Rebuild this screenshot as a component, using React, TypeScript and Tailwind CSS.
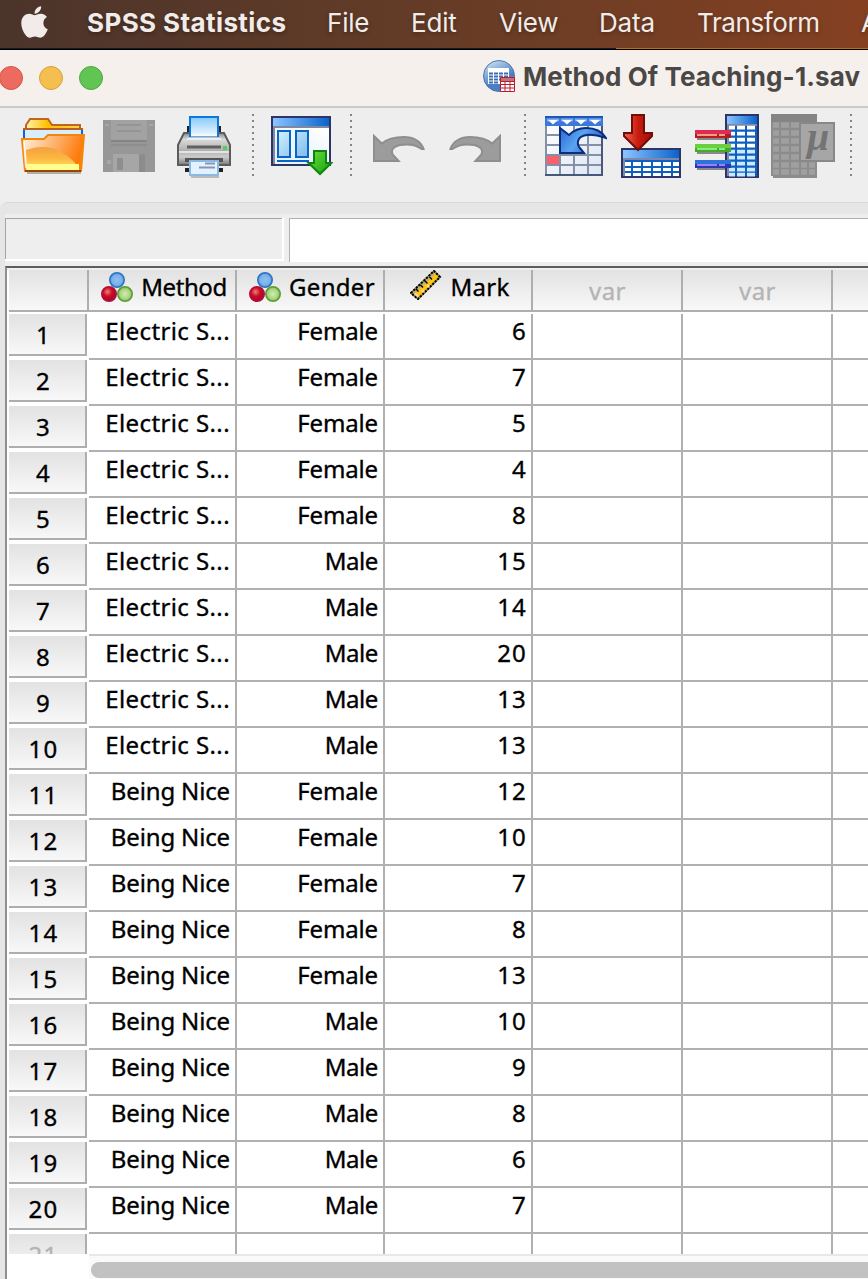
import type { ReactNode } from "react";
import { FaApple } from "react-icons/fa";
import clsx from "clsx";

interface CaseRow {
  method: string;
  gender: string;
  mark: number;
}

const SHOCK = "Electric S...";
const NICE = "Being Nice";

const cases: CaseRow[] = [
  { method: SHOCK, gender: "Female", mark: 6 },
  { method: SHOCK, gender: "Female", mark: 7 },
  { method: SHOCK, gender: "Female", mark: 5 },
  { method: SHOCK, gender: "Female", mark: 4 },
  { method: SHOCK, gender: "Female", mark: 8 },
  { method: SHOCK, gender: "Male", mark: 15 },
  { method: SHOCK, gender: "Male", mark: 14 },
  { method: SHOCK, gender: "Male", mark: 20 },
  { method: SHOCK, gender: "Male", mark: 13 },
  { method: SHOCK, gender: "Male", mark: 13 },
  { method: NICE, gender: "Female", mark: 12 },
  { method: NICE, gender: "Female", mark: 10 },
  { method: NICE, gender: "Female", mark: 7 },
  { method: NICE, gender: "Female", mark: 8 },
  { method: NICE, gender: "Female", mark: 13 },
  { method: NICE, gender: "Male", mark: 10 },
  { method: NICE, gender: "Male", mark: 9 },
  { method: NICE, gender: "Male", mark: 8 },
  { method: NICE, gender: "Male", mark: 6 },
  { method: NICE, gender: "Male", mark: 7 },
];

const gridCols =
  "grid grid-cols-[80px_148px_148px_148px_150px_150px_150px] w-[974px]";

// Toolbar icons are drawn on a 2px unit grid
function Icon({
  w,
  h,
  className,
  children,
}: {
  w: number;
  h: number;
  className?: string;
  children: ReactNode;
}) {
  return (
    <svg
      viewBox={`0 0 ${w} ${h}`}
      width={w * 2}
      height={h * 2}
      className={clsx("block shrink-0", className)}
    >
      {children}
    </svg>
  );
}

function Gradients() {
  return (
    <svg width="0" height="0" className="absolute">
      <defs>
        <linearGradient id="gold" x1="0" y1="0" x2="1" y2="0">
          <stop offset="0" stopColor="#fff3b0" />
          <stop offset="0.4" stopColor="#ffc000" />
          <stop offset="1" stopColor="#ffd24a" />
        </linearGradient>
        <linearGradient id="folder" x1="0" y1="0" x2="1" y2="0.25">
          <stop offset="0" stopColor="#fff4e6" />
          <stop offset="0.5" stopColor="#fdb878" />
          <stop offset="1" stopColor="#ff7a08" />
        </linearGradient>
        <linearGradient id="folderLow" x1="0" y1="0" x2="0" y2="1">
          <stop offset="0" stopColor="#f4a040" />
          <stop offset="0.5" stopColor="#fcb840" />
          <stop offset="1" stopColor="#ffe870" />
        </linearGradient>
        <linearGradient id="paper" x1="0" y1="0" x2="0" y2="1">
          <stop offset="0" stopColor="#86c9fb" />
          <stop offset="1" stopColor="#f0f9ff" />
        </linearGradient>
        <linearGradient id="steel" x1="0" y1="0" x2="0" y2="1">
          <stop offset="0" stopColor="#8a8a8a" />
          <stop offset="0.2" stopColor="#dadada" />
          <stop offset="0.55" stopColor="#b0b0b0" />
          <stop offset="0.75" stopColor="#cccccc" />
          <stop offset="1" stopColor="#777" />
        </linearGradient>
        <linearGradient id="bar" x1="0" y1="0" x2="1" y2="0">
          <stop offset="0" stopColor="#8cc4ff" />
          <stop offset="1" stopColor="#0a64cc" />
        </linearGradient>
        <linearGradient id="pane" x1="0" y1="0" x2="1" y2="1">
          <stop offset="0" stopColor="#d4f0fa" />
          <stop offset="1" stopColor="#7cbcec" />
        </linearGradient>
        <linearGradient id="body" x1="1" y1="0.3" x2="0.6" y2="1">
          <stop offset="0" stopColor="#fff" />
          <stop offset="1" stopColor="#e6f2fc" />
        </linearGradient>
        <linearGradient id="green" x1="0" y1="0" x2="1" y2="1">
          <stop offset="0" stopColor="#6be038" />
          <stop offset="1" stopColor="#14a010" />
        </linearGradient>
        <linearGradient id="red" x1="0" y1="0" x2="1" y2="0">
          <stop offset="0" stopColor="#f06450" />
          <stop offset="0.5" stopColor="#c81c10" />
          <stop offset="1" stopColor="#a01008" />
        </linearGradient>
        <linearGradient id="swoosh" x1="0" y1="0" x2="1" y2="0.4">
          <stop offset="0" stopColor="#2468d8" />
          <stop offset="0.5" stopColor="#5ca4f0" />
          <stop offset="1" stopColor="#2060cc" />
        </linearGradient>
        <linearGradient id="cell" x1="0" y1="0" x2="1" y2="1">
          <stop offset="0" stopColor="#fff" />
          <stop offset="1" stopColor="#dde6f4" />
        </linearGradient>
        <linearGradient id="disc" x1="0.3" y1="0" x2="0.6" y2="0.6">
          <stop offset="0" stopColor="#c4dcf0" />
          <stop offset="1" stopColor="#4a7fc0" />
        </linearGradient>
        <radialGradient id="ballBlue">
          <stop offset="0" stopColor="#8fc0f2" />
          <stop offset="0.7" stopColor="#7ab2ea" />
          <stop offset="1" stopColor="#5090d4" />
        </radialGradient>
        <radialGradient id="ballRed" cx="0.4" cy="0.35">
          <stop offset="0" stopColor="#f08080" />
          <stop offset="0.6" stopColor="#cc1020" />
          <stop offset="1" stopColor="#b00830" />
        </radialGradient>
        <radialGradient id="ballGreen">
          <stop offset="0" stopColor="#d4ecb0" />
          <stop offset="0.7" stopColor="#a8d480" />
          <stop offset="1" stopColor="#80b850" />
        </radialGradient>
      </defs>
    </svg>
  );
}

function OpenIcon() {
  return (
    <Icon w={32} h={28}>
      <rect x="3" y="27" width="27" height="1" fill="#b0aca8" />
      <path d="M2.5 6V3.5L4.5.5h9l2 3h14V6z" fill="url(#gold)" stroke="#c06420" />
      <path d="M1 5h30v12H1z" fill="#b8dcff" />
      <path d="M2 6h28v4H2z" fill="#d8eeff" />
      <path d="M1 5.5h30" stroke="#b86020" />
      <path d="M1.5 6v5M30.5 6v4" stroke="#0a64dc" />
      <path d="M.5 10.5h11l2-2h18L30 26.5H2z" fill="url(#folder)" stroke="#f88408" />
      <path
        d="M2.5 16c6-2 12-2 16.5.5 5 2.5 8.5 5.5 10 9.5H3z"
        fill="url(#folderLow)"
      />
      <path d="M3 23h26v3H3z" fill="#ffff90" />
      <path d="M1.5 12 2.5 25" stroke="#fff" opacity="0.7" />
      <path d="M31 10 29.5 26" stroke="#f88408" />
      <path d="M2 26.5h28" stroke="#9c4406" />
    </Icon>
  );
}

function SaveIcon() {
  return (
    <Icon w={26} h={26} className="mt-0.5">
      <path d="M0 0h26v26H0z" fill="#979797" />
      <path d="M4 0h18v10H4z" fill="#a2a2a2" />
      <path d="M7 2.5h12M7 5.5h12" stroke="#959595" />
      <path d="M4 10.5h18" stroke="#848484" />
      <path d="M4 12.5h18" stroke="#8e8e8e" />
      <path d="M5 17h13v9H5z" fill="#a6a6a6" />
      <path d="M18 17h3v9h-3z" fill="#8c8c8c" />
      <path d="M7 19h3v6H7z" fill="#8e8e8e" />
      <path d="M1 2h2v1H1zM23 2h2v1h-2zM2 20h2v2H2z" fill="#a6a6a6" />
    </Icon>
  );
}

function PrintIcon() {
  return (
    <Icon w={27} h={31}>
      <path d="M5 5h17v4H5zM4 26h19v2H4z" fill="#222" />
      <path
        d="M3.5 8.5h20l2 4 1 2v10H.5v-10l1-2z"
        fill="url(#steel)"
        stroke="#5c5c5c"
      />
      <path d="M6.5.5h14V10h-14z" fill="url(#paper)" stroke="#0a78dc" />
      <path d="M7 9.7h13" stroke="#f2f9ff" />
      <path d="M5 11.5h17" stroke="#eee" />
      <path d="M5 15.5h17" stroke="#606060" strokeWidth="1.6" />
      <path d="M1 18h25" stroke="#e4e4e4" />
      <path d="M23 15h2v2h-2z" fill="#5ccc60" />
      <path d="M4 21h19v2H4z" fill="#555" />
      <path d="M7 30h14v1H7z" fill="#bbb" />
      <path d="M6.5 22.5h14v7h-14z" fill="#e4f2ff" stroke="#8cb8e4" />
      <path d="M14 23.7h5M11 25.7h8" stroke="#8298b4" />
    </Icon>
  );
}

function RecallIcon() {
  return (
    <Icon w={31} h={30}>
      <path d="M.5.5h29v24H.5z" fill="url(#body)" stroke="#2c3468" />
      <path d="M1 1h28v4H1z" fill="url(#bar)" />
      <path d="M1 5.5h28M1.5 5v19" stroke="#8088a0" />
      <path
        d="M3.5 7.5h6v13h-6zM12.5 7.5h6v13h-6z"
        fill="url(#pane)"
        stroke="#0a64c8"
      />
      <path d="M3 22.5h16" stroke="#0a64c8" />
      <path
        d="M21.5 17.5h6v6h2.7L24.5 29 18.8 23.5h2.7z"
        fill="url(#green)"
        stroke="#108410"
      />
    </Icon>
  );
}

function ArrowIcon({ flip }: { flip?: boolean }) {
  return (
    <Icon w={26} h={14} className={clsx("mt-[18px]", flip && "-scale-x-100")}>
      <path
        d="M.5 1v12.5h12.3L10 10.5C8.5 8 10.5 6 13.5 5.5 17.500 4.800 21 5 24.300 7.500h1C24 3.500 20 1.500 15.500 1.500 11 1.500 7 2.500 4.500 4.800z"
        fill="#9c9c9c"
        stroke="#8e8e8e"
      />
    </Icon>
  );
}

function GotoCaseIcon() {
  return (
    <Icon w={31} h={30}>
      <path d="M0 0h29v30H0z" fill="url(#cell)" />
      <path
        d="M.5 5v25M7.5 5v25M14.5 5v25M21.5 5v25M28.5 5v25M0 9.5h29M0 14.5h29M0 19.5h29M0 24.5h29"
        stroke="#8490a4"
      />
      <path d="M0 29.5h29M28.5 2v28" stroke="#485878" />
      <path d="M0 0h29v5H0z" fill="#3c78dc" />
      <path d="M0 .5h29" stroke="#2054b8" />
      <path d="M1 2h6M8 2h6M15 2h6M22 2h6" stroke="#7cacf0" strokeWidth="1.5" />
      <path
        d="M1.5 2h5L4 4.2zM8.5 2h5L11 4.2zM15.5 2h5L18 4.2zM22.5 2h5L25 4.2z"
        fill="#fff"
      />
      <path d="M1 20h6v4H1z" fill="#f8606c" />
      <path
        d="M7.5 6v12.5h12l-2.5-3c-1.5-3 0-5.5 4-6 4-.5 6.5.5 9.5 1.5C28 7 24.5 6 20.5 6 17 6 14.5 7 12 9.5z"
        fill="url(#swoosh)"
        stroke="#0c2c7c"
      />
    </Icon>
  );
}

function GotoVariableIcon() {
  const cols = [
    [2, 3],
    [6, 4],
    [11, 4],
    [16, 4],
    [21, 4],
    [26, 3],
  ];
  return (
    <Icon w={30} h={32}>
      <path d="M.5 17.5h29v14H.5z" fill="#0c60c0" stroke="#2c3468" />
      <path d="M1 18h28v4H1z" fill="url(#bar)" />
      <path d="M1 22.5h28M1.5 22v9" stroke="#8088a8" />
      {[24, 27, 29.5].map((y) =>
        cols.map(([x, w]) => (
          <rect
            key={`${x}-${y}`}
            x={x}
            y={y}
            width={w}
            height={y === 24 ? 2 : 1.5}
            fill="#fff"
          />
        )),
      )}
      <path
        d="M5.5.5h6v9h4V11l-7 7-7-7V9.5h4z"
        fill="url(#red)"
        stroke="#740c08"
      />
    </Icon>
  );
}

function VariablesIcon() {
  const bars = [
    { y: 8, top: "#dc2c54", low: "#b41c20", light: "#f0a080" },
    { y: 15, top: "#6cd03c", low: "#48a828", light: "#84ec88" },
    { y: 23, top: "#2c74dc", low: "#2838b8", light: "#a080f0" },
  ];
  return (
    <Icon w={32} h={32}>
      <path d="M15.5.5h16v31h-16z" fill="#0c60c0" stroke="#2c3468" />
      <path d="M16 1h15v4H16z" fill="url(#bar)" />
      <path d="M16 5.5h15M16.5 5v26" stroke="#8088a8" />
      {[6, 9, 12, 15, 18, 21, 24, 27, 29.5].map((y) => (
        <path
          key={y}
          d={`M17 ${y + 0.8}h3M21 ${y + 0.8}h4M26 ${y + 0.8}h4`}
          stroke={y < 17 ? "#fff" : "#cce8ff"}
          strokeWidth="1.8"
        />
      ))}
      {bars.map((b) => (
        <g key={b.y}>
          <rect x="1" y={b.y + 4} width="14" height="1" fill="#888" />
          <rect x="0" y={b.y} width="18" height="2" fill={b.top} />
          <rect x="0" y={b.y + 2} width="18" height="2" fill={b.low} />
          <path d={`M1 ${b.y + 2.5}h10M12 ${b.y + 2.5}h3`} stroke={b.light} />
        </g>
      ))}
    </Icon>
  );
}

function ValueLabelsIcon() {
  return (
    <Icon w={32} h={32}>
      <path d="M0 0h23v31H0zM1 31h22v1H1z" fill="#8c8c8c" />
      <path d="M0 0h23v4H0z" fill="#848484" />
      {[4, 8, 12, 16, 20, 24, 27.5].map((y) => (
        <path
          key={y}
          d={`M1 ${y + 1.5}h3M5 ${y + 1.5}h4M10 ${y + 1.5}h4M15 ${y + 1.5}h3M19 ${y + 1.5}h3`}
          stroke="#9f9f9f"
          strokeWidth="2.8"
        />
      ))}
      <path d="M14.5 4.5h17v19h-17z" fill="#a6a6a6" stroke="#888" />
      <text
        x="18"
        y="18"
        fontSize="20"
        fontStyle="italic"
        fontWeight="bold"
        fill="#747474"
        fontFamily="Liberation Serif, serif"
      >
        μ
      </text>
    </Icon>
  );
}

function DocumentIcon() {
  return (
    <svg viewBox="0 0 32 32" className="size-8 shrink-0">
      <circle cx="16" cy="16" r="15.5" fill="url(#disc)" stroke="#4a78b4" />
      <path d="M5 8h21v16H5z" fill="#fff" />
      <path
        d="M6 13.5h4M11 13.5h4M16 13.5h4M21 13.5h4M6 16.5h4M11 16.5h4M16 16.5h4M21 16.5h4M6 19.5h4M11 19.5h4M16 19.5h4M6 22.5h4M11 22.5h4"
        stroke="#3c6cb4"
        strokeWidth="1.8"
      />
      <path d="M17.5 17.5h14v14h-14z" fill="#fff" stroke="#b81c2c" />
      <path d="M18 18h13v3H18z" fill="#c87078" />
      <path
        d="M17 21.5h14M17 24.5h14M17 28h14M22 21v10M27 21v10"
        stroke="#b81c2c"
      />
    </svg>
  );
}

function NominalIcon() {
  return (
    <svg viewBox="0 0 32 30" className="mt-0.5 h-[30px] w-8 shrink-0">
      <circle cx="16" cy="8" r="7.2" fill="url(#ballBlue)" stroke="#2c74c4" strokeWidth="1.6" />
      <circle cx="8" cy="22" r="7.2" fill="url(#ballRed)" stroke="#b40c38" strokeWidth="1.6" />
      <circle cx="24" cy="22" r="7.2" fill="url(#ballGreen)" stroke="#5c9c34" strokeWidth="1.6" />
    </svg>
  );
}

function ScaleIcon() {
  return (
    <svg viewBox="0 0 32 30" className="h-[30px] w-8 shrink-0">
      <path d="M1 23 24 1l6 6L8 29z" fill="#ffc60c" stroke="#8c8460" strokeWidth="2" />
      <path d="M4 23 24 4" stroke="#b4b088" strokeWidth="2" />
      <path
        d="M1 23 24 1l6 6L8 29z"
        fill="none"
        stroke="#000"
        strokeWidth="2"
        strokeDasharray="2 1.5"
      />
      <path
        d="m6 19 2.5 2.5M10.500 15l2.500 2.500M15 11l2.500 2.500M19.500 7l2.500 2.500"
        stroke="#000"
        strokeWidth="1.4"
      />
      <path d="m5 23.5 3 3M12 20l2 2M17 15l2 2" stroke="#ffd8b0" strokeWidth="2" />
    </svg>
  );
}

function Separator() {
  return (
    <div className="-mt-0.5 h-[62px] w-0.5 shrink-0 bg-[repeating-linear-gradient(to_bottom,#848484_0_2px,transparent_2px_6px)]" />
  );
}

function MenuBar() {
  return (
    <div className="flex h-12 items-center overflow-hidden bg-linear-to-r from-[#4b342b] via-[#653c26] to-[#854021] pl-4 font-['Inter',sans-serif] text-[26px] whitespace-nowrap text-[#f1ece9] [text-shadow:0_2px_4px_rgba(0,0,0,0.3)]">
      <FaApple className="-mt-1 h-[36px] w-[37px] shrink-0" />
      <div className="flex items-center pb-[3px] tracking-[-0.2px]">
        <span className="ml-[34px] w-[240px] shrink-0 font-bold tracking-[0.4px]">
          SPSS Statistics
        </span>
        <span className="w-[84px] shrink-0">File</span>
        <span className="w-[88px] shrink-0">Edit</span>
        <span className="w-[100px] shrink-0">View</span>
        <span className="w-[98px] shrink-0">Data</span>
        <span className="w-[164px] shrink-0 tracking-[-0.4px]">Transform</span>
        <span>Analyze</span>
      </div>
    </div>
  );
}

function TitleBar() {
  return (
    <div className="flex h-[58px] items-center border-b-2 border-[#cdc9c7] bg-[#f6f0ed]">
      <div className="-ml-px flex w-[484px] shrink-0 gap-4">
        <span className="size-6 rounded-full border border-[#d2554a] bg-[#ec6a5e]" />
        <span className="size-6 rounded-full border border-[#d6a13f] bg-[#f4bf4f]" />
        <span className="size-6 rounded-full border border-[#4fa73f] bg-[#61c554]" />
      </div>
      <div className="-mt-1">
        <DocumentIcon />
      </div>
      <h1 className="ml-2 pb-[3px] font-['Inter',sans-serif] text-[26px] font-bold tracking-[0.1px] whitespace-nowrap text-[#4a4846]">
        Method Of Teaching-1.sav
      </h1>
    </div>
  );
}

function Toolbar() {
  return (
    <div className="flex h-[94px] items-start overflow-hidden pt-2">
      <div className="mt-0.5 ml-[21px] flex w-[231px] gap-[18px]">
        <OpenIcon />
        <SaveIcon />
        <div className="-mt-0.5 ml-1">
          <PrintIcon />
        </div>
      </div>
      <Separator />
      <div className="ml-[17px] w-[79px]">
        <RecallIcon />
      </div>
      <Separator />
      <div className="ml-[21px] flex w-[151px] gap-6">
        <ArrowIcon />
        <ArrowIcon flip />
      </div>
      <Separator />
      <div className="-mt-0.5 ml-[19px] flex w-[305px] shrink-0">
        <div className="mt-0.5 w-[76px]">
          <GotoCaseIcon />
        </div>
        <div className="w-[74px]">
          <GotoVariableIcon />
        </div>
        <div className="w-[76px]">
          <VariablesIcon />
        </div>
        <ValueLabelsIcon />
      </div>
      <Separator />
    </div>
  );
}

function HeaderCell({ icon, label }: { icon?: ReactNode; label?: string }) {
  return (
    <div
      className={clsx(
        "flex h-[42px] justify-center gap-2 overflow-hidden border-r-2 border-b-2 border-[#aeaeae] bg-linear-to-b from-[#e2e2e2] to-[#f8f8f8] leading-[34px]",
        icon ? "pl-1" : "pl-px",
      )}
    >
      {icon}
      {icon ? (
        <span
          className={
            label === "Method" ? "tracking-[-0.4px]" : "tracking-[0.3px]"
          }
        >
          {label}
        </span>
      ) : (
        <span className="pt-1 tracking-[0.4px] text-[#b4b4b4]">{label}</span>
      )}
    </div>
  );
}

function Row({ number, data }: { number: number; data?: CaseRow }) {
  const cells = [data?.method, data?.gender, data?.mark, "", "", ""];
  return (
    <div className={clsx(gridCols, "h-[46px] shrink-0")}>
      <div className="h-[42px] w-[78px] border-r-2 border-b-2 border-[#aeaeae] bg-linear-to-b from-[#e2e2e2] to-[#f8f8f8]">
        <div
          className={clsx(
            "w-[69px] text-center leading-[41px] tracking-[1.2px]",
            !data && "text-[#b4b4b4]",
          )}
        >
          {number}
        </div>
      </div>
      {cells.map((value, i) => (
        <div
          key={i}
          className={clsx(
            "h-[46px] overflow-hidden border-r-2 border-b-2 border-[#b0b0b0] text-right leading-[33px] whitespace-nowrap",
            i === 2 ? "pr-1 tracking-[1.2px]" : "pr-[5px]",
            value === SHOCK && "tracking-[0.4px]",
            (value === NICE || value === "Female") && "tracking-[-0.15px]",
            value === "Male" && "tracking-[-0.4px]",
          )}
        >
          {value}
        </div>
      ))}
    </div>
  );
}

export default function App() {
  return (
    <div className="flex h-[1279px] w-[868px] flex-col overflow-hidden bg-[#eeeeee] text-black">
      <Gradients />
      <MenuBar />
      <div className="flex h-0.5 shrink-0 border-b border-black">
        <div className="w-[616px] bg-[#101c2e]" />
        <div className="flex-1 bg-[#b5701f]" />
      </div>
      <TitleBar />
      <Toolbar />
      <div className="flex h-[1077px] shrink-0 flex-col rounded-tl-lg border-t border-[#dadada] bg-[#e6e6e6] pt-[11px] pl-[5px]">
        <div className="flex h-[52px] shrink-0 gap-[5px] bg-[#eeeeee] pt-1">
          <div className="h-[43px] w-[279px] shrink-0 border-r-2 border-b-2 border-white bg-[#eeeeee]">
            <div className="h-full border-t border-l border-[#a4a4a4]" />
          </div>
          <div className="h-11 flex-1 border-t border-l border-[#b0b0b0] bg-white" />
        </div>
        <div className="flex min-h-0 flex-1 flex-col border-t-2 border-l-2 border-t-[#5c5d60] border-l-[#8f8f8f] bg-white pl-0.5 font-['Noto_Sans',sans-serif] text-[24px] [-webkit-text-stroke:0.35px_currentColor]">
          <div className="-ml-0.5 h-0.5 shrink-0 bg-[#eeeeee]" />
          <div className="flex h-[984px] shrink-0 flex-col overflow-hidden">
            <div className={clsx(gridCols, "mb-0.5 shrink-0")}>
              <HeaderCell />
              <HeaderCell icon={<NominalIcon />} label="Method" />
              <HeaderCell icon={<NominalIcon />} label="Gender" />
              <HeaderCell icon={<ScaleIcon />} label="Mark" />
              <HeaderCell label="var" />
              <HeaderCell label="var" />
              <HeaderCell />
            </div>
            {cases.map((c, i) => (
              <Row key={i} number={i + 1} data={c} />
            ))}
            <Row number={21} />
          </div>
          <div className="ml-20 h-[25px] shrink-0 border-t-2 border-[#e8e8e8] bg-[#fafafa] pt-1.5 pl-0.5">
            <div className="h-4 rounded-l-full bg-[#c2c2c2]" />
          </div>
        </div>
      </div>
    </div>
  );
}
